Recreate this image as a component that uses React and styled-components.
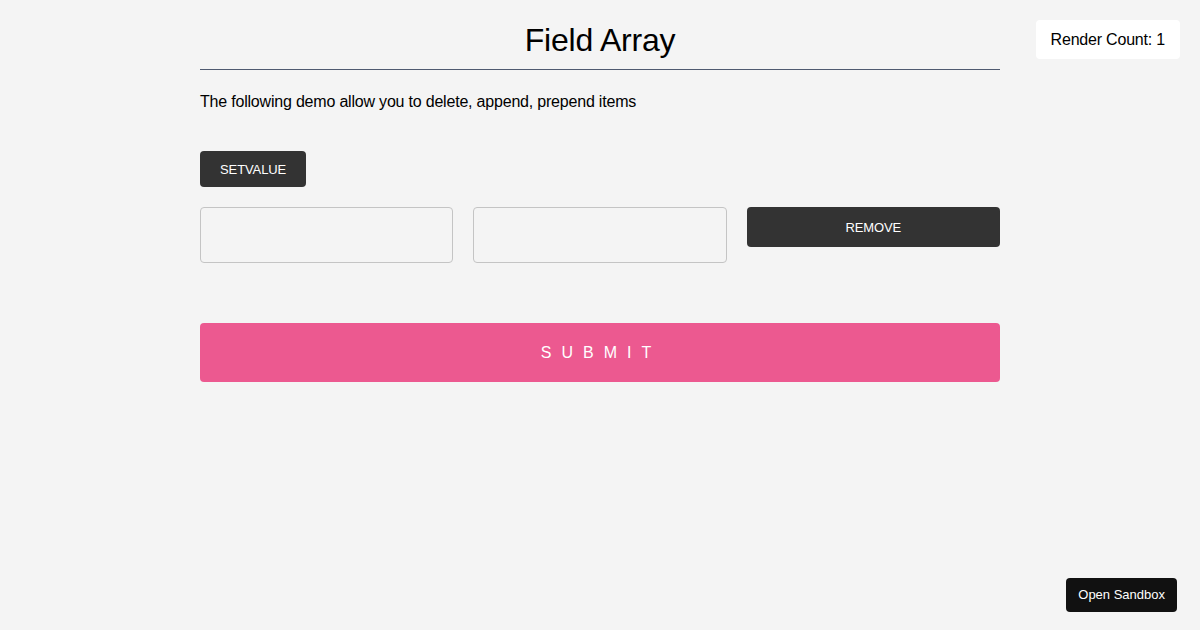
import React from 'react'
import styled, { createGlobalStyle } from 'styled-components'

const GlobalStyle = createGlobalStyle`
  * { box-sizing: border-box; }
  html, body {
    margin: 0;
    padding: 0;
    background: #f4f4f4;
    font-family: "Liberation Sans", Arial, sans-serif;
    letter-spacing: -0.2px;
    color: #000;
  }
`

const Page = styled.div`
  position: relative;
  width: 1200px;
  height: 630px;
  overflow: hidden;
`

const Form = styled.form`
  width: 800px;
  margin: 0 auto;
  display: flex;
  flex-direction: column;
`

const Title = styled.h1`
  margin: 20px 0 0;
  padding-bottom: 9px;
  font-size: 32px;
  font-weight: 400;
  line-height: 40px;
  text-align: center;
  border-bottom: 1px solid #4f5a70;
`

const Lead = styled.p`
  margin: 22px 0 0;
  font-size: 16px;
  line-height: 19px;
`

const DarkButton = styled.button`
  background: #333;
  color: #fff;
  border: none;
  border-radius: 4px;
  font-family: inherit;
  font-size: 13px;
  letter-spacing: -0.1px;
  text-transform: uppercase;
  cursor: pointer;
  height: ${({ h }) => h}px;
  padding: 0 20px;
`

const SetValue = styled(DarkButton)`
  align-self: flex-start;
  margin-top: 40px;
`

const Row = styled.div`
  display: grid;
  grid-template-columns: repeat(3, 1fr);
  gap: 20px;
  margin-top: 20px;
  align-items: start;
`

const Input = styled.input`
  height: 56px;
  width: 100%;
  border: 1px solid #c4c4c4;
  border-radius: 4px;
  background: #f4f4f4;
  font-size: 14px;
  padding: 10px 15px;
`

const Submit = styled.button`
  margin-top: 60px;
  height: 59px;
  background: #ec5990;
  color: #fff;
  border: none;
  border-radius: 4px;
  font-family: inherit;
  font-size: 16px;
  text-transform: uppercase;
  letter-spacing: 10px;
  padding-left: 8px;
`

const Counter = styled.div`
  position: absolute;
  top: 20px;
  right: 20px;
  background: #fff;
  border-radius: 4px;
  padding: 10px 15px;
  font-size: 16px;
  line-height: 19px;
`

const SandboxLink = styled.a`
  position: absolute;
  right: 23px;
  bottom: 18px;
  background: #111;
  color: #fff;
  border-radius: 4px;
  padding: 9px 12px;
  font-size: 13px;
  line-height: 16px;
  letter-spacing: 0;
  text-decoration: none;
`

export default function App() {
  return (
    <Page>
      <GlobalStyle />
      <Form onSubmit={(e) => e.preventDefault()}>
        <Title>Field Array</Title>
        <Lead>The following demo allow you to delete, append, prepend items</Lead>
        <SetValue type="button" h={36}>setValue</SetValue>
        <Row>
          <Input />
          <Input />
          <DarkButton type="button" h={40}>Remove</DarkButton>
        </Row>
        <Submit type="submit">Submit</Submit>
      </Form>
      <Counter>Render Count: 1</Counter>
      <SandboxLink href="#">Open Sandbox</SandboxLink>
    </Page>
  )
}
